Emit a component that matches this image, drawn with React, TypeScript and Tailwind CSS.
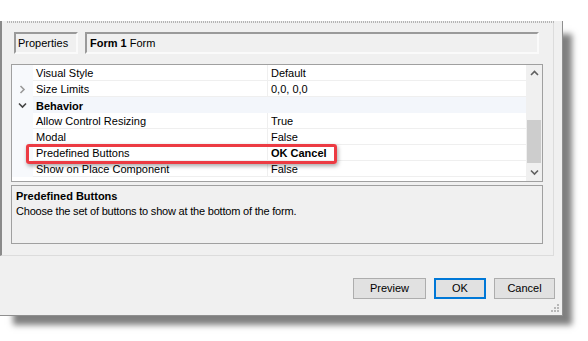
import React from 'react';

type Row = {
  name: string;
  value?: string;
  category?: boolean;
  expander?: 'collapsed' | 'expanded';
  boldValue?: boolean;
};

const rows: Row[] = [
  { name: 'Visual Style', value: 'Default' },
  { name: 'Size Limits', value: '0,0, 0,0', expander: 'collapsed' },
  { name: 'Behavior', category: true, expander: 'expanded' },
  { name: 'Allow Control Resizing', value: 'True' },
  { name: 'Modal', value: 'False' },
  { name: 'Predefined Buttons', value: 'OK Cancel', boldValue: true },
  { name: 'Show on Place Component', value: 'False' },
];

function Chevron({ dir, color }: { dir: 'up' | 'down' | 'right'; color: string }) {
  const d =
    dir === 'up' ? 'M1 5 L4.5 1.5 L8 5' : dir === 'down' ? 'M1 1.5 L4.5 5 L8 1.5' : 'M1.5 1 L5 4.5 L1.5 8';
  const size = dir === 'right' ? { w: 7, h: 9 } : { w: 9, h: 7 };
  return (
    <svg width={size.w} height={size.h} viewBox={`0 0 ${size.w} ${size.h}`}>
      <path d={d} fill="none" stroke={color} strokeWidth="1.6" />
    </svg>
  );
}

function GridRow({ row }: { row: Row }) {
  return (
    <div className="flex h-[16px]">
      <div className="w-[21px] flex items-center justify-center bg-[#f7f9fc]">
        {row.expander === 'collapsed' && <Chevron dir="right" color="#9a9a9a" />}
        {row.expander === 'expanded' && <Chevron dir="down" color="#444444" />}
      </div>
      {row.category ? (
        <div className="flex-1 flex items-center pl-[3px] pt-[2px] bg-[#f3f6fb] font-bold">{row.name}</div>
      ) : (
        <>
          <div className="w-[235px] flex items-center pl-[3px] pt-[2px] border-b border-r border-[#efefef] bg-white">
            {row.name}
          </div>
          <div
            className={`flex-1 flex items-center pl-[3px] pt-[2px] border-b border-[#efefef] bg-white ${
              row.boldValue ? 'font-bold' : ''
            }`}
          >
            {row.value}
          </div>
        </>
      )}
    </div>
  );
}

function Button({ label, width, focused }: { label: string; width: string; focused?: boolean }) {
  return (
    <div
      className={`${width} h-[21px] flex items-center justify-center bg-[#e1e1e1] ${
        focused ? 'border-2 border-[#0078d7]' : 'border border-[#adadad]'
      }`}
    >
      {label}
    </div>
  );
}

export default function App() {
  return (
    <div
      className="w-[588px] h-[341px] bg-white pt-[21px] text-[11px] leading-none text-black"
      style={{ fontFamily: '"Liberation Sans", Arial, sans-serif' }}
    >
      <div className="relative w-[563px] h-[295px] bg-[#f0f0f0] border-r border-b border-[#8f8f8f] shadow-[11px_11px_6px_-2px_rgba(0,0,0,0.5)] flex flex-col">
        {/* dithered torn top edge */}
        <div className="absolute left-[7px] right-[8px] top-0 h-[2px] bg-[repeating-linear-gradient(90deg,#b5b5b5_0_1px,#eeeeee_1px_2px)]" />

        {/* main panel */}
        <div className="h-[235px] w-[554px] border-l-2 border-l-[#8a8a8a] border-r border-b border-r-[#dcdcdc] border-b-[#dcdcdc] flex flex-col">
          {/* header */}
          <div className="flex gap-[7px] pl-[12px] pt-[11px]">
            <div className="w-[64px] h-[22px] flex items-center pl-[2px] border-2 border-t-[#9a9a9a] border-l-[#9a9a9a] border-r-[#fafafa] border-b-[#fafafa]">
              Properties
            </div>
            <div className="w-[454px] h-[22px] flex items-center pl-[3px] border-2 border-t-[#9a9a9a] border-l-[#9a9a9a] border-r-[#fafafa] border-b-[#fafafa]">
              <span className="font-bold">Form 1</span>
              <span>&nbsp;Form</span>
            </div>
          </div>

          {/* property grid */}
          <div className="relative ml-[9px] mt-[10px] w-[532px] h-[118px] border border-[#a0a0a0] bg-white flex">
            <div className="flex-1 flex flex-col">
              {rows.map((row) => (
                <GridRow key={row.name} row={row} />
              ))}
            </div>
            <div className="w-[16px] bg-[#f0f0f0] flex flex-col items-center">
              <div className="h-[17px] flex items-center justify-center">
                <Chevron dir="up" color="#606060" />
              </div>
              <div className="flex-1 w-full flex flex-col">
                <div className="h-[38px]" />
                <div className="h-[43px] mx-[1px] bg-[#cdcdcd]" />
              </div>
              <div className="h-[17px] flex items-center justify-center">
                <Chevron dir="down" color="#606060" />
              </div>
            </div>

            {/* annotation highlight */}
            <div className="absolute left-[14px] top-[79px] w-[311px] h-[20px] rounded-[3px] border-[3px] border-[#ec3b43] shadow-[1px_2px_4px_rgba(0,0,0,0.35)]" />
          </div>

          {/* description */}
          <div className="ml-[9px] mt-[3px] w-[532px] h-[59px] border border-[#a0a0a0] px-[4px] pt-[5px] flex flex-col gap-[4px]">
            <div className="font-bold">Predefined Buttons</div>
            <div className="tracking-[-0.2px]">Choose the set of buttons to show at the bottom of the form.</div>
          </div>
        </div>

        {/* buttons */}
        <div className="flex justify-end gap-[8px] pr-[7px] pt-[22px]">
          <Button label="Preview" width="w-[73px]" />
          <Button label="OK" width="w-[52px]" focused />
          <Button label="Cancel" width="w-[61px]" />
        </div>

        {/* size grip */}
        <svg className="absolute right-[3px] bottom-[3px]" width="8" height="8" viewBox="0 0 8 8">
          <rect x="6" y="0" width="2" height="2" fill="#b8b8b8" />
          <rect x="3" y="3" width="2" height="2" fill="#b8b8b8" />
          <rect x="6" y="3" width="2" height="2" fill="#b8b8b8" />
          <rect x="0" y="6" width="2" height="2" fill="#b8b8b8" />
          <rect x="3" y="6" width="2" height="2" fill="#b8b8b8" />
          <rect x="6" y="6" width="2" height="2" fill="#b8b8b8" />
        </svg>
      </div>
    </div>
  );
}
